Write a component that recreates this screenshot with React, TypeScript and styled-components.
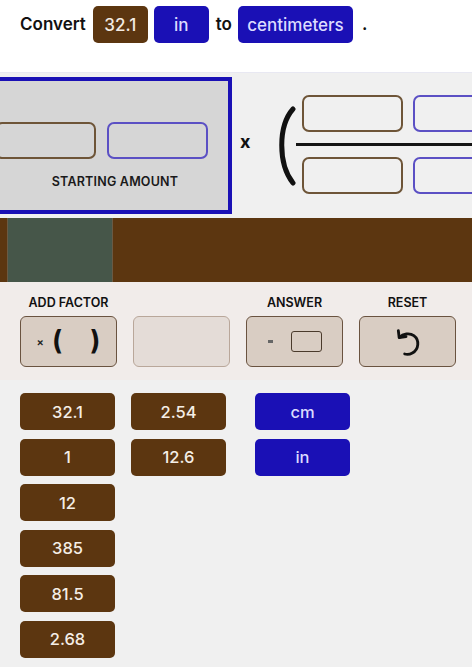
import React from "react";
import styled, { createGlobalStyle } from "styled-components";

const BROWN = "#5c3610";
const BLUE = "#1a10b5";

const GlobalStyle = createGlobalStyle`
  html, body {
    margin: 0;
    padding: 0;
    background: #f0f0f0;
    font-family: Inter, "Noto Sans", "Liberation Sans", sans-serif;
  }
`;

const Page = styled.div`
  width: 472px;
  height: 667px;
  overflow: hidden;
  background: #f0f0f0;
`;

const Header = styled.header`
  height: 72px;
  background: #ffffff;
  display: flex;
  align-items: flex-start;
  padding: 6px 0 0 20px;
  box-sizing: border-box;
  gap: 6px;
`;

const Word = styled.span`
  font-size: 17px;
  font-weight: 600;
  color: #111;
  line-height: 37px;
  margin-right: 1px;
`;

const Chip = styled.span<{ $tone: "brown" | "blue"; $w: number }>`
  width: ${(p) => p.$w}px;
  height: 37px;
  border-radius: 5px;
  display: flex;
  align-items: center;
  justify-content: center;
  font-size: 17px;
  font-weight: 500;
  background: ${(p) => (p.$tone === "brown" ? BROWN : BLUE)};
  color: ${(p) => (p.$tone === "brown" ? "#f3ebe2" : "#dcdcff")};
  box-sizing: border-box;
`;

const Workspace = styled.section`
  height: 146px;
  display: flex;
  align-items: stretch;
  margin-left: -30px;
  padding: 4px 0;
  box-sizing: border-box;
  background: #f0f0f0;
  border-top: 1px solid #e8e8f2;
`;

const StartBox = styled.div`
  width: 262px;
  flex-shrink: 0;
  border: 4px solid ${BLUE};
  background: #d6d6d6;
  box-sizing: border-box;
  display: flex;
  flex-direction: column;
  align-items: center;
  padding-top: 41px;
`;

const Pair = styled.div`
  display: flex;
  gap: 11px;
`;

const Slot = styled.div<{ $tone: "brown" | "blue" }>`
  width: 101px;
  height: 37px;
  border-radius: 7px;
  box-sizing: border-box;
  border: 2px solid ${(p) => (p.$tone === "brown" ? "#6e5538" : "#5b50c4")};
  flex-shrink: 0;
`;

const BoxLabel = styled.div`
  margin-top: 15px;
  margin-left: 28px;
  font-size: 12.5px;
  font-weight: 600;
  color: #1a1a1a;
  letter-spacing: 0.2px;
`;

const Times = styled.div`
  font-size: 18px;
  font-weight: 700;
  color: #111;
  margin: 0 0 0 8px;
  align-self: center;
  padding-bottom: 8px;
`;

const Paren = styled.svg`
  width: 24px;
  height: 80px;
  margin-left: 24px;
  align-self: center;
  flex-shrink: 0;
`;

const Fraction = styled.div`
  display: flex;
  flex-direction: column;
  justify-content: center;
  margin-left: -2px;
  padding-bottom: 2px;
  flex: 1;
  min-width: 0;
`;

const FractionRow = styled.div`
  display: flex;
  gap: 10px;
  padding-left: 6px;
`;

const Bar = styled.div`
  height: 3.5px;
  background: #151515;
  margin: 11px 0 11px;
`;

const Tray = styled.div`
  height: 64px;
  background: ${BROWN};
  display: flex;
  padding-left: 7px;
`;

const TrayTile = styled.div`
  width: 106px;
  background: #465649;
  box-shadow: inset 1px 0 0 #6a5a44, inset -1px 0 0 #6a5a44;
`;

const Controls = styled.section`
  height: 98px;
  background: #f1ecea;
  display: grid;
  grid-template-columns: repeat(4, 97px);
  column-gap: 16px;
  padding: 13px 0 0 20px;
  box-sizing: border-box;
`;

const Control = styled.div`
  display: flex;
  flex-direction: column;
  align-items: center;
`;

const ControlLabel = styled.div`
  height: 21px;
  font-size: 12.5px;
  font-weight: 600;
  color: #111;
  line-height: 15px;
`;

const ControlButton = styled.div<{ $disabled?: boolean }>`
  width: 97px;
  height: 51px;
  border-radius: 6px;
  box-sizing: border-box;
  background: ${(p) => (p.$disabled ? "#e4dcd7" : "#d9cdc3")};
  border: 1.5px solid ${(p) => (p.$disabled ? "#b9a79a" : "#6a5340")};
  display: flex;
  align-items: center;
  justify-content: center;
  gap: 6px;
`;

const SmallX = styled.span`
  font-size: 11px;
  font-weight: 600;
  color: #222;
  margin-right: 2px;
`;

const BigParen = styled.span`
  font-size: 27px;
  font-weight: 700;
  color: #111;
  line-height: 27px;
  margin-right: 22px;
  padding-bottom: 3px;
  &:last-child {
    margin-right: 0;
  }
`;

const Dash = styled.span`
  width: 5px;
  height: 3px;
  background: #666;
  margin-right: 12px;
`;

const MiniBox = styled.span`
  width: 31px;
  height: 21px;
  border: 1.5px solid #4a3a2c;
  border-radius: 3px;
  box-sizing: border-box;
`;

const Palette = styled.section`
  display: flex;
  padding: 13px 0 0 20px;
  gap: 16px;
`;

const Column = styled.div<{ $gapLeft?: number }>`
  display: flex;
  flex-direction: column;
  gap: 8.6px;
  margin-left: ${(p) => p.$gapLeft ?? 0}px;
`;

const Tile = styled.div<{ $tone: "brown" | "blue" }>`
  width: 95px;
  height: 37px;
  border-radius: 5px;
  background: ${(p) => (p.$tone === "brown" ? BROWN : BLUE)};
  color: ${(p) => (p.$tone === "brown" ? "#f5eee6" : "#dcdcff")};
  display: flex;
  align-items: center;
  justify-content: center;
  font-size: 16.5px;
  font-weight: 500;
`;

const numbersA = ["32.1", "1", "12", "385", "81.5", "2.68"];
const numbersB = ["2.54", "12.6"];
const units = ["cm", "in"];

const ResetIcon = () => (
  <svg width="40" height="40" viewBox="0 0 24 24" fill="none" stroke="#111" strokeWidth="1.7" strokeLinecap="round" strokeLinejoin="round">
    <path d="M6.2 5.2 L6.7 9.4 L10.8 8.8" />
    <path d="M6.9 9.2 C 9 7, 13 6.4, 15.5 8.2 C 19 10.8, 18.6 16.4, 14.6 18.6 C 13.2 19.4, 11.4 19.6, 10 19.2" />
  </svg>
);

export default function App() {
  return (
    <Page>
      <GlobalStyle />
      <Header>
        <Word>Convert</Word>
        <Chip $tone="brown" $w={55}>32.1</Chip>
        <Chip $tone="blue" $w={55}>in</Chip>
        <Word style={{ margin: "0 0 0 1px" }}>to</Word>
        <Chip $tone="blue" $w={115}>centimeters</Chip>
        <Word style={{ marginLeft: 3 }}>.</Word>
      </Header>

      <Workspace>
        <StartBox>
          <Pair>
            <Slot $tone="brown" />
            <Slot $tone="blue" />
          </Pair>
          <BoxLabel>STARTING AMOUNT</BoxLabel>
        </StartBox>
        <Times>x</Times>
        <Paren viewBox="0 0 24 80">
          <path d="M19 3 C 4 20, 4 58, 19 77" stroke="#111" strokeWidth="5" fill="none" strokeLinecap="round" />
        </Paren>
        <Fraction>
          <FractionRow>
            <Slot $tone="brown" />
            <Slot $tone="blue" />
          </FractionRow>
          <Bar />
          <FractionRow>
            <Slot $tone="brown" />
            <Slot $tone="blue" />
          </FractionRow>
        </Fraction>
      </Workspace>

      <Tray>
        <TrayTile />
      </Tray>

      <Controls>
        <Control>
          <ControlLabel>ADD FACTOR</ControlLabel>
          <ControlButton>
            <SmallX>×</SmallX>
            <BigParen>(</BigParen>
            <BigParen>)</BigParen>
          </ControlButton>
        </Control>
        <Control>
          <ControlLabel />
          <ControlButton $disabled />
        </Control>
        <Control>
          <ControlLabel>ANSWER</ControlLabel>
          <ControlButton>
            <Dash />
            <MiniBox />
          </ControlButton>
        </Control>
        <Control>
          <ControlLabel>RESET</ControlLabel>
          <ControlButton>
            <ResetIcon />
          </ControlButton>
        </Control>
      </Controls>

      <Palette>
        <Column>
          {numbersA.map((n) => (
            <Tile key={n} $tone="brown">{n}</Tile>
          ))}
        </Column>
        <Column>
          {numbersB.map((n) => (
            <Tile key={n} $tone="brown">{n}</Tile>
          ))}
        </Column>
        <Column $gapLeft={13}>
          {units.map((u) => (
            <Tile key={u} $tone="blue">{u}</Tile>
          ))}
        </Column>
      </Palette>
    </Page>
  );
}
